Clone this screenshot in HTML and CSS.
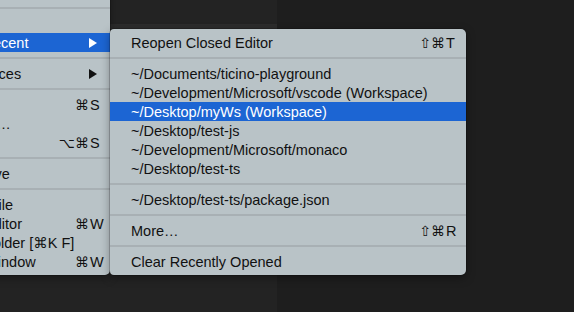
FILE: index.html
```html
<!DOCTYPE html>
<html lang="en">
<head>
  <meta charset="UTF-8">
  <title>Open Recent</title>
  <link rel="stylesheet" href="styles.css">
</head>
<body>
  <div class="workbench">
    <div class="side-pane">
      <div class="pane-band"></div>
    </div>
    <div class="editor-pane"></div>
  </div>

  <!-- File menu, mostly off the left edge -->
  <div class="menu file-menu">
    <div class="menu-item"><span class="label">New Window</span></div>
    <div class="menu-sep"></div>
    <div class="menu-item"><span class="label">Open…</span></div>
    <div class="menu-item active"><span class="label">Open Recent</span><span class="arrow"></span></div>
    <div class="menu-sep"></div>
    <div class="menu-item"><span class="label">Preferences</span><span class="arrow"></span></div>
    <div class="menu-sep"></div>
    <div class="menu-item"><span class="label">Save</span><span class="keys">⌘<b>S</b></span></div>
    <div class="menu-item"><span class="label">Save As…</span></div>
    <div class="menu-item"><span class="label">Save All</span><span class="keys">⌥⌘<b>S</b></span></div>
    <div class="menu-sep"></div>
    <div class="menu-item"><span class="label">Auto Save</span></div>
    <div class="menu-sep"></div>
    <div class="menu-item"><span class="label">Revert File</span></div>
    <div class="menu-item"><span class="label">Close Editor</span><span class="keys">⌘<b>W</b></span></div>
    <div class="menu-item"><span class="label">Close Folder [⌘K F]</span></div>
    <div class="menu-item"><span class="label">Close Window</span><span class="keys">⌘<b>W</b></span></div>
  </div>

  <!-- Open Recent submenu -->
  <div class="menu recent-menu">
    <div class="menu-item"><span class="label">Reopen Closed Editor</span><span class="keys">⇧⌘<b>T</b></span></div>
    <div class="menu-sep"></div>
    <div class="menu-item"><span class="label">~/Documents/ticino-playground</span></div>
    <div class="menu-item"><span class="label">~/Development/Microsoft/vscode (Workspace)</span></div>
    <div class="menu-item active"><span class="label">~/Desktop/myWs (Workspace)</span></div>
    <div class="menu-item"><span class="label">~/Desktop/test-js</span></div>
    <div class="menu-item"><span class="label">~/Development/Microsoft/monaco</span></div>
    <div class="menu-item"><span class="label">~/Desktop/test-ts</span></div>
    <div class="menu-sep"></div>
    <div class="menu-item"><span class="label">~/Desktop/test-ts/package.json</span></div>
    <div class="menu-sep"></div>
    <div class="menu-item"><span class="label">More…</span><span class="keys">⇧⌘<b>R</b></span></div>
    <div class="menu-sep"></div>
    <div class="menu-item"><span class="label">Clear Recently Opened</span></div>
  </div>
</body>
</html>
```

FILE: styles.css
```css
/* reset */
* { margin: 0; padding: 0; box-sizing: border-box; }
html, body {
  width: 574px;
  height: 312px;
  overflow: hidden;
}
body {
  font-family: "Liberation Sans", "DejaVu Sans", sans-serif;
  font-size: 14.5px;
  background: #1e1e1e;
  color: #111;
}
/* app behind the menus */
.workbench {
  display: flex;
  height: 100%;
}
.side-pane {
  width: 277px;
  background: #232323;
  padding-top: 24px;
}
.pane-band {
  height: 5px;
  background: #2c2c2c;
}
.editor-pane {
  flex: 1;
  background: #1e1e1e;
}
/* menus */
.menu {
  position: absolute;
  background: #b9c3c7;
  padding: 4px 0;
  box-shadow: 0 0 0 0.5px rgba(0, 0, 0, 0.35), 0 3px 10px rgba(0, 0, 0, 0.35);
}
.file-menu {
  left: -78px;
  top: -21px;
  width: 188px;
  border-radius: 0 0 5px 5px;
}
.recent-menu {
  left: 110px;
  top: 29px;
  width: 356px;
  border-radius: 4px 5px 5px 4px;
  z-index: 2;
}
.menu-item {
  display: flex;
  align-items: center;
  height: 19px;
  padding: 0 6px 0 21px;
  white-space: nowrap;
}
.menu-item.active {
  background: #1c65d3;
  color: #fff;
}
.label {
  flex: 1;
}
.keys {
  font-family: "DejaVu Sans", sans-serif;
  font-size: 14px;
}
.keys b {
  display: inline-block;
  width: 15px;
  font-family: "Liberation Sans", sans-serif;
  font-size: 14.5px;
  font-weight: normal;
  padding-left: 1px;
}
.arrow {
  width: 0;
  height: 0;
  margin-right: 7px;
  border-left: 8px solid #111;
  border-top: 5px solid transparent;
  border-bottom: 5px solid transparent;
}
.active .arrow {
  border-left-color: #fff;
}
.menu-sep {
  height: 2px;
  margin: 5px 0;
  background: #a8b0b4;
}
```
